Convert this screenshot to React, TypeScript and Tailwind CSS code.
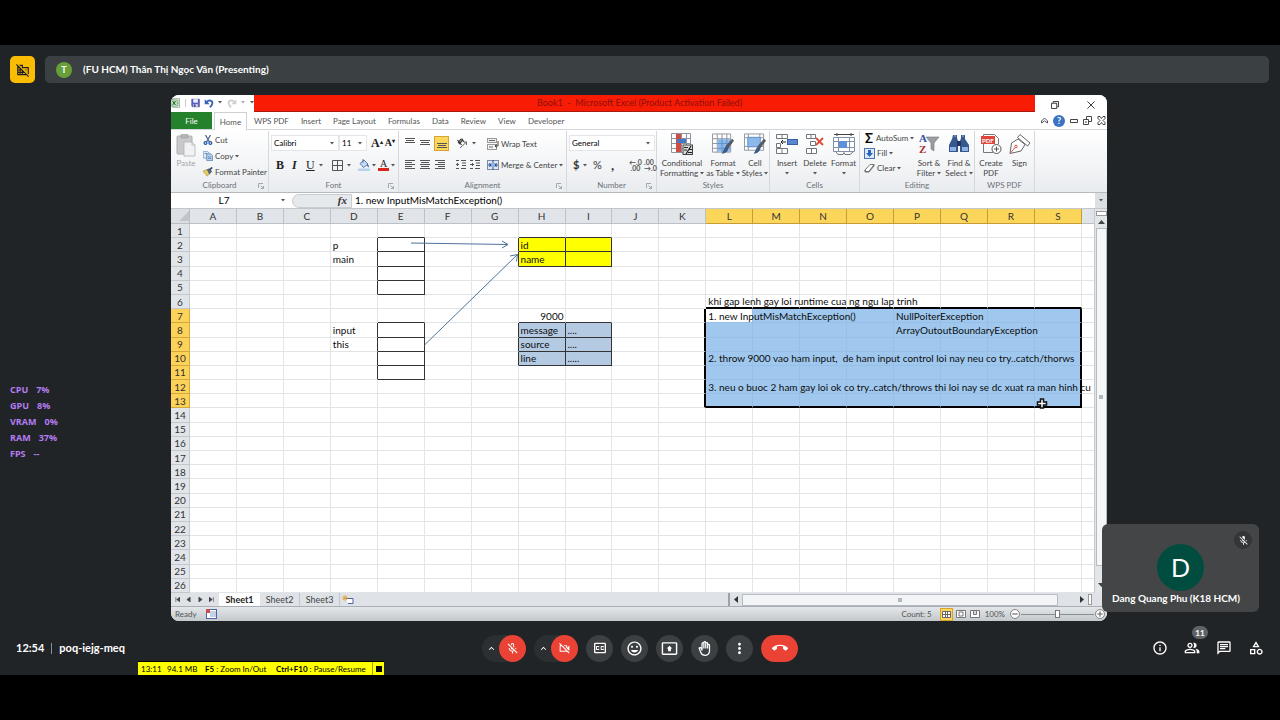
import type { ReactNode } from "react";
import {
  MdCallEnd,
  MdDomainDisabled,
  MdKeyboardArrowUp,
  MdMicOff,
  MdMoreVert,
  MdOutlineBackHand,
  MdOutlineCategory,
  MdOutlineChat,
  MdOutlineClosedCaption,
  MdOutlineInfo,
  MdOutlineMicOff,
  MdOutlineMood,
  MdOutlinePeopleAlt,
  MdOutlinePresentToAll,
  MdOutlineVideocamOff,
} from "react-icons/md";

const columns = "ABCDEFGHIJKLMNOPQRS".split("");
const rows = Array.from({ length: 26 }, (_, i) => i + 1);

const cells: Record<string, string> = {
  D2: "p",
  D3: "main",
  D8: "input",
  D9: "this",
  H2: "id",
  H3: "name",
  H7: "9000",
  H8: "message",
  H9: "source",
  H10: "line",
  I8: "....",
  I9: "....",
  I10: ".....",
  L6: "khi gap lenh gay loi runtime cua ng ngu lap trinh",
  L7: "1. new InputMisMatchException()",
  P7: "NullPoiterException",
  P8: "ArrayOutoutBoundaryException",
  L10: "2. throw 9000 vao ham input,  de ham input control loi nay neu co try..catch/thorws",
  L12: "3. neu o buoc 2 ham gay loi ok co try..catch/throws thi loi nay se dc xuat ra man hinh cu",
};

// [first column, last column, first row, last row]
const boxes = [
  [4, 4, 2, 5],
  [4, 4, 8, 11],
  [7, 8, 2, 3],
  [7, 8, 8, 10],
];

const inBox = (c: number, r: number) =>
  boxes.some(([c1, c2, r1, r2]) => c >= c1 && c <= c2 && r >= r1 && r <= r2);

const isSelected = (c: number, r: number) => c >= 11 && c <= 18 && r >= 7 && r <= 13;

const fillOf = (c: number, r: number) => {
  if (c === 11 && r === 7) return "bg-white";
  if (isSelected(c, r)) return "bg-[#a0c8ee]";
  if ((c === 7 || c === 8) && (r === 2 || r === 3)) return "bg-[#ffff00]";
  if ((c === 7 || c === 8) && r >= 8 && r <= 10) return "bg-[#b4cae3]";
  return "bg-white";
};

const rightLine = (c: number, r: number) => {
  if (isSelected(c, r) !== isSelected(c + 1, r)) return "border-r-2 border-r-black";
  if (inBox(c, r) || inBox(c + 1, r)) return "border-r border-r-[#333333]";
  if (isSelected(c, r)) return "border-r border-r-[#98c0e6]";
  return "border-r border-r-[#e2e5e8]";
};

const bottomLine = (c: number, r: number) => {
  if (isSelected(c, r) !== isSelected(c, r + 1)) return "border-b-2 border-b-black";
  if (inBox(c, r) || inBox(c, r + 1)) return "border-b border-b-[#333333]";
  if (isSelected(c, r)) return "border-b border-b-[#98c0e6]";
  return "border-b border-b-[#e2e5e8]";
};

const Caret = () => (
  <svg viewBox="0 0 4 3" className="w-1 h-[3px] shrink-0" fill="#555">
    <path d="M0 0h4L2 2.6z" />
  </svg>
);

/* ---------- ribbon icons ---------- */

const ExcelIcon = () => (
  <svg viewBox="0 0 12 12" className="w-3 h-3">
    <rect x="2.500" y=".5" width="9" height="11" fill="#fff" stroke="#6f9a6f" />
    <path d="M7 3h4M7 5h4M7 7h4M7 9h4" stroke="#7fae7f" />
    <rect x="0" y="2" width="8" height="8" fill="#e3f1e1" stroke="#3b7d3d" strokeWidth=".7" />
    <path d="M2 3.500l4 5M6 3.500l-4 5" stroke="#26762b" strokeWidth="1.500" />
  </svg>
);

const SaveIcon = () => (
  <svg viewBox="0 0 12 12" className="w-3 h-3">
    <path d="M1 1h10v10H2l-1-1z" fill="#5b62c4" stroke="#3b3f91" strokeWidth=".8" />
    <rect x="3" y="1" width="6" height="4.500" fill="#eef0fb" />
    <rect x="3" y="7.500" width="6" height="3.500" fill="#d3d6ee" />
    <rect x="4" y="8" width="2" height="3" fill="#31357d" />
  </svg>
);

const UndoIcon = ({ color }: { color: string }) => (
  <svg viewBox="0 0 12 12" className="w-[10px] h-[10px]" fill="none" stroke={color} strokeWidth="2.200">
    <path d="M3 5c3-3.500 7.500-2 7 1.500C9.700 9 8.500 10 7 11" />
    <path d="M.8 1.500v6h6z" fill={color} stroke="none" />
  </svg>
);

const PasteIcon = () => (
  <svg viewBox="0 0 20 24" className="w-5 h-6">
    <rect x="1" y="3" width="15" height="18" rx="1" fill="#c9c9cb" stroke="#aeaeb2" />
    <path d="M5 1.500h7V5H5z" fill="#b4b4b8" stroke="#9b9ba0" strokeWidth=".6" />
    <path d="M8 9h8l3 3v11H8z" fill="#f2f2f4" stroke="#b3b3b8" strokeWidth=".8" />
    <path d="M16 9v3h3" fill="none" stroke="#b3b3b8" strokeWidth=".8" />
  </svg>
);

const CutIcon = () => (
  <svg viewBox="0 0 12 12" className="w-[10px] h-[10px]" fill="none">
    <path d="M3 0l4.500 8M9 0L4.500 8" stroke="#5a6f92" strokeWidth="1.600" />
    <circle cx="3" cy="9.500" r="1.700" stroke="#2456a4" strokeWidth="1.500" />
    <circle cx="8.800" cy="9.500" r="1.700" stroke="#2456a4" strokeWidth="1.500" />
  </svg>
);

const CopyIcon = () => (
  <svg viewBox="0 0 12 12" className="w-[10px] h-[10px]" strokeWidth=".8">
    <path d="M.5.5h5l2 2v6h-7z" fill="#dbe8f8" stroke="#6d8fbd" />
    <path d="M4.500 3.500h5l2 2v6h-7z" fill="#bcd4f0" stroke="#3e6cab" />
    <path d="M6 7h4M6 9h4M2 3h3" stroke="#3e6cab" />
  </svg>
);

const PainterIcon = () => (
  <svg viewBox="0 0 12 12" className="w-[10px] h-[10px]">
    <path d="M0 5l5-2L9 7l-4 4z" fill="#e7cf61" stroke="#8d7a28" strokeWidth=".6" />
    <path d="M4.500 3l3-1.500 3.500 4L7.500 9z" fill="#596579" />
    <path d="M8 3.500L11 .5" stroke="#3d4c66" strokeWidth="2" />
  </svg>
);

const BordersIcon = () => (
  <svg viewBox="0 0 11 11" className="w-[11px] h-[11px]" fill="none" stroke="#555">
    <path d="M.5.5h10v10H.5zM5.500.5v10M.5 5.500h10" />
  </svg>
);

const BucketIcon = () => (
  <svg viewBox="0 0 12 12" className="w-3 h-3">
    <path d="M2 4.500L6 1l4 4-4.500 3.500z" fill="#c9dcf3" stroke="#4b6ea3" strokeWidth=".9" />
    <path d="M5 0v4" stroke="#4b6ea3" strokeWidth=".9" />
    <path d="M9 5c2 1 2 2 1.500 3.500C9.500 8 9 7 9 5z" fill="#2f62b5" />
    <rect x="0" y="9.500" width="12" height="2.500" fill="#b8d2ea" />
  </svg>
);

const LinesIcon = ({ d }: { d: string }) => (
  <svg viewBox="0 0 12 12" className="w-3 h-3" stroke="#555">
    <path d={d} />
  </svg>
);

const OrientationIcon = () => (
  <svg viewBox="0 0 12 12" className="w-3 h-3" fill="none" stroke="#333">
    <path d="M2 6l3-4M3 7l4-4.500M1.500 3l4 5M5.500 1.500L8 5" strokeWidth="1.200" />
    <path d="M4 11l6.500-6M10.500 8V5H8" stroke="#666" />
  </svg>
);

const WrapIcon = () => (
  <svg viewBox="0 0 12 12" className="w-3 h-3">
    <rect x=".5" y=".5" width="9" height="4" fill="#eee" stroke="#999" />
    <rect x=".5" y="6.500" width="9" height="5" fill="#f7f7f7" stroke="#999" />
    <path d="M2 2.500h6M2 9h4" stroke="#666" />
    <path d="M11 3v5H8.500M9.500 6.500L8 8l1.500 1.500" fill="none" stroke="#444" />
  </svg>
);

const MergeIcon = () => (
  <svg viewBox="0 0 12 12" className="w-3 h-3">
    <rect x=".5" y="1.500" width="11" height="9" fill="#dfe8f4" stroke="#7d8ca3" />
    <rect x="2" y="4" width="8" height="4" fill="#8fb2e0" />
    <path d="M1 6h3M11 6H8M2.500 4.500L4 6 2.500 7.500M9.500 4.500L8 6l1.500 1.500M6 1v3M6 8v3" fill="none" stroke="#26437a" strokeWidth=".9" />
  </svg>
);

const DecimalIcon = ({ top, bottom }: { top: string; bottom: string }) => (
  <span className="flex flex-col w-3 text-[7px] leading-[6px] font-bold text-[#555]">
    <span>{top}</span>
    <span className="pl-px">{bottom}</span>
  </span>
);

const grid = "M.5.5h19v19H.5zM5.500.5v19M10.500.5v19M15.500.5v19M.5 5.500h19M.5 10.500h19M.5 15.500h19";

const ConditionalIcon = () => (
  <svg viewBox="0 0 22 22" className="w-[22px] h-[22px]">
    <path d={grid} fill="#fff" stroke="#8d949c" />
    <rect x="5" y="1" width="5" height="18" fill="#cf4c45" />
    <rect x="6" y="6" width="9" height="4" fill="#4578c7" />
    <rect x="12" y="12" width="9.500" height="9.500" fill="#ddd" stroke="#444" />
    <path d="M13 14.500h4M13 17h3M17 19.500h4M20 13l-5 8M18 16.500h3" stroke="#222" strokeWidth="1.200" />
  </svg>
);

const brush = "M21 6l1.500 1.500L17 15l-2.500-1.500z";
const bristles = "M14.500 13.500L17 15c0 4-3 6-7 6 2-2 2-5 4.500-7.500z";

const FormatTableIcon = () => (
  <svg viewBox="0 0 23 22" className="w-[22px] h-[22px]">
    <path d={grid} fill="#fff" stroke="#8d949c" />
    <rect x="6" y="6" width="13" height="13" fill="#8db8ea" />
    <path d="M10.500 6v13M15.500 6v13M6 10.500h13M6 15.500h13" stroke="#5f93d0" />
    <path d={brush} fill="#555b66" stroke="#555b66" />
    <path d={bristles} fill="#3d5a85" />
  </svg>
);

const CellStylesIcon = () => (
  <svg viewBox="0 0 23 22" className="w-[22px] h-[22px]">
    <path d="M.5.5h20v17H.5zM4.500.5v17M16.500.5v17M.5 4.500h20M.5 13.500h20" fill="#fff" stroke="#8d949c" />
    <rect x="4" y="4" width="13" height="10" fill="#8db8ea" stroke="#5f93d0" />
    <path d={brush} fill="#555b66" stroke="#555b66" />
    <path d={bristles} fill="#3d5a85" />
  </svg>
);

const InsertIcon = () => (
  <svg viewBox="0 0 22 22" className="w-[22px] h-[22px]">
    <path d="M.5 1.500h11v4H.5zM6 1.500v4M.5 10.500h4v4h-4zM.5 15.500h11v5H.5zM6 15.500v5" fill="#fff" stroke="#70767e" />
    <rect x="11.500" y="6.500" width="10" height="5" fill="#5b87d2" stroke="#3a5fa3" />
    <path d="M10 9H5M7 7L5 9l2 2" fill="none" stroke="#222" />
  </svg>
);

const DeleteIcon = () => (
  <svg viewBox="0 0 22 22" className="w-[22px] h-[22px]">
    <path d="M2.500 1.500h9v4h-9zM7 1.500v4M2.500 15.500h10v5h-10zM7.500 15.500v5M6.500 8.500h5v4h-5z" fill="#fff" stroke="#70767e" />
    <path d="M12 5l7 7M19 5l-7 7" stroke="#dd4b35" strokeWidth="1.800" />
  </svg>
);

const FormatIcon = () => (
  <svg viewBox="0 0 24 22" className="w-6 h-[22px]">
    <path d="M2 1.500h20M5 0v3M19 0v3" stroke="#444" />
    <path d="M1.500 4.500h21v14h-21zM6.500 4.500v14M17.500 4.500v14M1.500 8.500h21M1.500 14.500h21" fill="#fff" stroke="#8390a3" />
    <rect x="7" y="8" width="8" height="7" fill="#5d91da" />
    <path d="M4 19l2 2.500h5l1-2 1 2h5l3-2.500" fill="none" stroke="#777" />
  </svg>
);

const FillIcon = () => (
  <svg viewBox="0 0 11 11" className="w-[11px] h-[11px]">
    <rect x=".5" y=".5" width="10" height="10" fill="#dce9f8" stroke="#4a73b1" />
    <path d="M4 2h3v3h2L5.500 9 2 5h2z" fill="#2b63bd" />
  </svg>
);

const EraserIcon = () => (
  <svg viewBox="0 0 11 11" className="w-[11px] h-[11px]" fill="#fff" stroke="#666" strokeWidth=".9">
    <path d="M1 7l5-5.500h4L5 8.500H1.500z" />
    <path d="M1 7v2h4l5-6V1.500" fill="none" />
  </svg>
);

const SortIcon = () => (
  <svg viewBox="0 0 22 22" className="w-[22px] h-[22px]">
    <path d="M8 4h13l-5 6v8l-3-2v-6z" fill="#9a9ea3" stroke="#777" strokeWidth=".6" />
    <text x="1" y="9" fontSize="11" fontWeight="bold" fontFamily="Liberation Serif, serif" fill="#2f4f9e">A</text>
    <text x="1" y="20" fontSize="11" fontWeight="bold" fontFamily="Liberation Serif, serif" fill="#a83232">Z</text>
  </svg>
);

const FindIcon = () => (
  <svg viewBox="0 0 22 22" className="w-[22px] h-[22px]" fill="#37588f">
    <path d="M5 2h4v3l1 3v11H1v-7L4 6z" />
    <path d="M13 2h4v4l4 6v7h-9V8l1-3z" />
    <rect x="9" y="8" width="4" height="5" fill="#22375f" />
    <path d="M2 14h6v4H2zM14 14h6v4h-6z" fill="#8fb2e4" />
    <path d="M6 3h2M14 3h2" stroke="#a5c0e8" />
  </svg>
);

const PdfIcon = () => (
  <svg viewBox="0 0 22 22" className="w-[22px] h-[22px]">
    <path d="M3.500 11v8.500H13M3.500 3V1.500h11l4 4V11" fill="none" stroke="#777" />
    <rect x="1" y="3" width="14" height="8" fill="#e2453b" />
    <text x="2" y="9.500" fontSize="6" fontWeight="bold" fontFamily="Lato, sans-serif" fill="#fff">PDF</text>
    <circle cx="16.500" cy="16" r="4.500" fill="#fff" stroke="#555" />
    <path d="M14 16h5M16.500 13.500v5" stroke="#555" />
  </svg>
);

const SignIcon = () => (
  <svg viewBox="0 0 22 22" className="w-[22px] h-[22px]" fill="#fff" stroke="#666">
    <path d="M11 1.500L21 10l-2.500 3-10-8.500z" />
    <path d="M9 6L2.500 10 1 20.500 12 18l4-6.500z" />
    <path d="M1.500 20L6 14.500" stroke="#d2554b" />
    <circle cx="7" cy="13.500" r="1.300" stroke="#d2554b" />
  </svg>
);

/* ---------- ribbon ---------- */

const Group = ({ label, width, launcher, children }: { label: string; width: string; launcher?: boolean; children: ReactNode }) => (
  <div className={`${width} shrink-0 flex flex-col border-r border-[#d5d8dc]`}>
    <div className="flex-1 min-h-0">{children}</div>
    <div className="relative h-[13px] text-center leading-3 text-[#6d7278]">
      {label}
      {launcher && (
        <svg viewBox="0 0 6 6" className="absolute right-1 top-1 w-[6px] h-[6px]" fill="none" stroke="#a4a8ae">
          <path d="M.5 5V.5H5M2.500 2.500l3 3M5.500 3v2.500H3" />
        </svg>
      )}
    </div>
  </div>
);

const BigButton = ({ icon, lines, width, caret }: { icon: ReactNode; lines: string[]; width: string; caret?: boolean }) => (
  <button className={`${width} flex flex-col items-center shrink-0 pt-[2px]`}>
    <span className="h-[25px]">{icon}</span>
    <span className="leading-[10px] whitespace-nowrap">{lines[0]}</span>
    <span className="flex items-center gap-[2px] h-[10px] leading-[10px] whitespace-nowrap">
      {lines[1]}
      {caret && <Caret />}
    </span>
  </button>
);

const SmallButton = ({ icon, text, caret }: { icon: ReactNode; text: string; caret?: boolean }) => (
  <button className="flex items-center gap-[2px] whitespace-nowrap leading-3">
    {icon}
    {text}
    {caret && <Caret />}
  </button>
);

const Drop = ({ label, value, width }: { label: string; value: string; width: string }) => (
  <span className={`${width} flex items-center pr-1 border border-[#e3e5e8] bg-white`}>
    <select aria-label={label} className="appearance-none flex-1 min-w-0 pl-[2px] h-[14px] bg-transparent text-black outline-none">
      <option>{value}</option>
    </select>
    <Caret />
  </span>
);

const Ribbon = () => (
  <div className="flex h-[63px] pt-px overflow-hidden bg-linear-to-b from-white to-[#e9ecef] border-b border-[#b6babf] text-[#444]">
    <Group label="Clipboard" width="w-[98px]" launcher>
      <div className="flex">
        <button className="w-[30px] flex flex-col items-center pt-[2px] gap-[1px] text-[#a5a5a8]">
          <PasteIcon />
          <span className="leading-[10px]">Paste</span>
        </button>
        <div className="flex flex-col gap-1 pt-[3px] pl-[2px]">
          <SmallButton icon={<CutIcon />} text="Cut" />
          <SmallButton icon={<CopyIcon />} text="Copy" caret />
          <SmallButton icon={<PainterIcon />} text="Format Painter" />
        </div>
      </div>
    </Group>
    <Group label="Font" width="w-[130px]" launcher>
      <div className="flex items-center pt-1 pl-[2px]">
        <Drop label="Font" value="Calibri" width="w-[68px]" />
        <Drop label="Font size" value="11" width="w-[28px]" />
        <button className="pl-1 font-bold text-[12px] leading-4 font-['Liberation_Serif',serif] text-[#222]">
          A<sup className="text-[6px]">▴</sup>
        </button>
        <button className="pl-[2px] font-bold text-[10px] leading-4 font-['Liberation_Serif',serif] text-[#222]">
          A<sup className="text-[6px]">▾</sup>
        </button>
      </div>
      <div className="flex items-center pt-[6px] pl-[7px] text-[#222]">
        <button className="w-[16px] text-left font-bold text-[12px] leading-4 font-['Liberation_Serif',serif]">B</button>
        <button className="w-[14px] text-left italic font-bold text-[12px] leading-4 font-['Liberation_Serif',serif]">I</button>
        <button className="w-[26px] flex items-center gap-1 underline text-[12px] leading-4 font-['Liberation_Serif',serif]">
          U
          <Caret />
        </button>
        <button className="w-[26px] flex items-center gap-1">
          <BordersIcon />
          <Caret />
        </button>
        <button className="w-[20px] flex items-center gap-[2px]">
          <BucketIcon />
          <Caret />
        </button>
        <button className="flex items-center gap-[2px]">
          <span className="w-[11px] h-3 border-b-[3px] border-[#d9251c] text-[10px] leading-[9px] font-['Liberation_Serif',serif]">A</span>
          <Caret />
        </button>
      </div>
    </Group>
    <Group label="Alignment" width="w-[168px]" launcher>
      <div className="flex">
        <div className="w-[85px] pl-[5px]">
          <div className="flex items-center gap-[3px] pt-[3px] h-[21px]">
            <LinesIcon d="M1 1.500h10M2 3.500h8M1 5.500h10" />
            <LinesIcon d="M1 3.500h10M2 5.500h8M1 7.500h10" />
            <span className="flex items-center justify-center w-[15px] h-[15px] border border-[#d6a531] bg-[#fdd65c]">
              <LinesIcon d="M1 6.500h10M2 8.500h8M1 10.500h10" />
            </span>
            <span className="flex items-center gap-1 pl-1">
              <OrientationIcon />
              <Caret />
            </span>
          </div>
          <div className="flex items-center gap-[3px] pt-[7px]">
            <LinesIcon d="M1 1.500h10M1 3.500h7M1 5.500h10M1 7.500h7M1 9.500h10" />
            <LinesIcon d="M1 1.500h10M2 3.500h8M1 5.500h10M2 7.500h8M1 9.500h10" />
            <LinesIcon d="M1 1.500h10M4 3.500h7M1 5.500h10M4 7.500h7M1 9.500h10" />
            <span className="flex gap-[2px] pl-[6px]">
              <LinesIcon d="M1 1.500h3M6 1.500h5M7 4h4M1 5.500h3M2.500 4v3M7 6.500h4M1 9.500h3M6 9.500h5" />
              <LinesIcon d="M1 1.500h3M6 1.500h5M7 4h4M1 5.500h4M3.500 4v3M7 6.500h4M1 9.500h3M6 9.500h5" />
            </span>
          </div>
        </div>
        <div className="flex flex-col items-start gap-[9px] pt-[7px] pl-[3px]">
          <SmallButton icon={<WrapIcon />} text="Wrap Text" />
          <SmallButton icon={<MergeIcon />} text="Merge & Center" caret />
        </div>
      </div>
    </Group>
    <Group label="Number" width="w-[90px]" launcher>
      <div className="pt-1 pl-[2px]">
        <Drop label="Number format" value="General" width="w-[86px]" />
      </div>
      <div className="flex items-center pt-[6px] pl-[6px] text-[11px] leading-4 text-[#333]">
        <button className="w-[20px] flex items-center gap-1 font-bold">
          $<Caret />
        </button>
        <button className="w-[18px] text-left">%</button>
        <button className="w-[18px] text-left text-[14px] font-bold">,</button>
        <button className="w-[14px]">
          <DecimalIcon top="←.0" bottom=".00" />
        </button>
        <button className="w-3">
          <DecimalIcon top=".00" bottom="→.0" />
        </button>
      </div>
    </Group>
    <Group label="Styles" width="w-[113px]">
      <div className="flex pl-[2px]">
        <BigButton icon={<ConditionalIcon />} lines={["Conditional", "Formatting"]} width="w-[46px]" caret />
        <BigButton icon={<FormatTableIcon />} lines={["Format", "as Table"]} width="w-[36px]" caret />
        <BigButton icon={<CellStylesIcon />} lines={["Cell", "Styles"]} width="w-[28px]" caret />
      </div>
    </Group>
    <Group label="Cells" width="w-[90px]">
      <div className="flex pl-[3px]">
        <BigButton icon={<InsertIcon />} lines={["Insert", ""]} width="w-[28px]" caret />
        <BigButton icon={<DeleteIcon />} lines={["Delete", ""]} width="w-[28px]" caret />
        <BigButton icon={<FormatIcon />} lines={["Format", ""]} width="w-[29px]" caret />
      </div>
    </Group>
    <Group label="Editing" width="w-[115px]">
      <div className="flex">
        <div className="flex flex-col items-start w-[53px] gap-[3px] pt-[1px] pl-1">
          <SmallButton icon={<span className="w-[10px] text-[13px] leading-3 font-bold text-black">Σ</span>} text="AutoSum" caret />
          <SmallButton icon={<FillIcon />} text="Fill" caret />
          <SmallButton icon={<EraserIcon />} text="Clear" caret />
        </div>
        <BigButton icon={<SortIcon />} lines={["Sort &", "Filter"]} width="w-[32px]" caret />
        <BigButton icon={<FindIcon />} lines={["Find &", "Select"]} width="w-[28px]" caret />
      </div>
    </Group>
    <Group label="WPS PDF" width="w-[60px]">
      <div className="flex pl-px">
        <BigButton icon={<PdfIcon />} lines={["Create", "PDF"]} width="w-[30px]" />
        <BigButton icon={<SignIcon />} lines={["Sign", ""]} width="w-[27px]" />
      </div>
    </Group>
  </div>
);

const TitleBar = () => (
  <div className="flex h-[17px] bg-white">
    <div className="flex items-center gap-[5px] w-[83px] pb-[2px]">
      <ExcelIcon />
      <span className="w-px h-2 bg-[#c5c8cc]"></span>
      <SaveIcon />
      <span className="flex items-center gap-1 -ml-px">
        <UndoIcon color="#3c62b4" />
        <Caret />
      </span>
      <span className="flex items-center gap-1 opacity-50">
        <span className="-scale-x-100">
          <UndoIcon color="#9aa0a8" />
        </span>
        <Caret />
      </span>
      <Caret />
    </div>
    <div className="flex-1 pr-[10px] bg-[#f91c05] border-b border-[#a61a10] text-center text-[9px] leading-4 text-[#8d0f08]">
      Book1 &nbsp;-&nbsp; Microsoft Excel (Product Activation Failed)
    </div>
    <div className="flex items-center justify-between w-[72px] pt-[2px] pl-4 pr-3">
      <button aria-label="Restore">
        <svg viewBox="0 0 9 9" className="w-2 h-2" fill="none" stroke="#222">
          <path d="M.5 2.500h6v6h-6zM2.500 2V.5h6v6H7" />
        </svg>
      </button>
      <button aria-label="Close">
        <svg viewBox="0 0 9 9" className="w-2 h-2" fill="none" stroke="#222">
          <path d="M.5.5l8 8M8.500.5l-8 8" />
        </svg>
      </button>
    </div>
  </div>
);

const tabs = ["WPS PDF", "Insert", "Page Layout", "Formulas", "Data", "Review", "View", "Developer"];

const RibbonTabs = () => (
  <div className="flex h-[18px] bg-white border-b border-[#d3d6da] text-[#555]">
    <button className="w-[41px] mr-[2px] bg-[#24812c] text-white">File</button>
    <button className="w-[33px] mr-px -mb-px border border-b-0 border-[#cdd1d5] bg-white">Home</button>
    {tabs.map((tab) => (
      <button key={tab} className="px-[6px] whitespace-nowrap">
        {tab}
      </button>
    ))}
    <div className="flex items-center gap-[5px] ml-auto pr-px">
      <svg viewBox="0 0 7 7" className="w-[7px] h-[7px]" fill="none" stroke="#555">
        <path d="M.5 4l3-3 3 3v2l-3-2-3 2z" />
      </svg>
      <span className="flex items-center justify-center w-3 h-3 rounded-full bg-[#3b72c4] text-white font-bold text-[9px]">?</span>
      <svg viewBox="0 0 8 4" className="w-2 h-1" fill="none" stroke="#444">
        <path d="M.5.5h7v3h-7z" />
      </svg>
      <svg viewBox="0 0 9 9" className="w-[9px] h-[9px]" fill="none" stroke="#444">
        <path d="M.5 3.500h5v5h-5zM3.500 3V.5h5v5H6M2 6h2" />
      </svg>
      <svg viewBox="0 0 9 9" className="w-[9px] h-[9px]" fill="none" stroke="#444">
        <path d="M1 .5h2l1.500 2 1.500-2h2v2l-2 2 2 2v2H6l-1.500-2-1.500 2H1v-2l2-2-2-2z" />
      </svg>
    </div>
  </div>
);

const FormulaBar = () => (
  <div className="flex items-center h-4 bg-white border-b border-[#c3c7cb]">
    <input aria-label="Name box" defaultValue="L7" className="w-[106px] h-[15px] text-center text-[10px] text-black outline-none" />
    <span className="w-[15px] pl-1">
      <Caret />
    </span>
    <span className="flex items-center justify-end w-[60px] h-[14px] pr-1 rounded-l-full border border-[#c9cdd1] bg-[#e6e9ec] text-[11px] italic font-bold font-['Liberation_Serif',serif] text-[#333]">
      fx
    </span>
    <input
      aria-label="Formula"
      defaultValue="1. new InputMisMatchException()"
      className="flex-1 h-[15px] pl-[3px] text-[10px] text-black outline-none"
    />
    <button aria-label="Expand" className="flex items-center justify-center w-3 h-[15px] bg-[#dde0e3]">
      <Caret />
    </button>
  </div>
);

/* ---------- sheet ---------- */

const Sheet = () => (
  <div className="flex">
    <div className="relative flex-1 min-w-0 overflow-hidden">
      <table className="w-full h-[384px] table-fixed border-separate border-spacing-0 text-[10px] leading-3 text-[#0d0d0d]">
        <colgroup>
          <col className="w-[19px]" />
          {columns.map((name) => (
            <col key={name} />
          ))}
          <col className="w-3" />
        </colgroup>
        <thead>
          <tr>
            <th className="h-[15px] p-0 bg-[#dce0e4] border-r border-b border-[#b9bec4]">
              <svg viewBox="0 0 10 10" className="w-[10px] h-[10px] ml-auto" fill="#bfc5cb">
                <path d="M10 0v10H0z" />
              </svg>
            </th>
            {columns.map((name, c) => (
              <th
                key={name}
                className={`p-0 font-normal text-[#333] border-r border-b ${
                  c >= 11 ? "bg-[#fbd65b] border-[#c79b35]" : "bg-[#e1e5e9] border-[#bcc1c7]"
                }`}
              >
                {name}
              </th>
            ))}
            <th className="p-0 bg-[#e1e5e9] border-b border-[#bcc1c7]"></th>
          </tr>
        </thead>
        <tbody>
          {rows.map((r) => (
            <tr key={r}>
              <th
                className={`h-[14px] p-0 font-normal text-[#333] border-r border-b ${
                  r >= 7 && r <= 13 ? "bg-[#fdd258] border-[#d3a83d]" : "bg-[#e1e5e9] border-[#c3c8cd]"
                }`}
              >
                {r}
              </th>
              {columns.map((name, c) => (
                <td
                  key={name}
                  className={`h-[14px] py-0 pl-[2px] pr-px whitespace-pre ${r === 7 && c === 7 ? "text-right" : ""} ${fillOf(c, r)} ${rightLine(c, r)} ${bottomLine(c, r)}`}
                >
                  {cells[name + r]}
                </td>
              ))}
              <td className="p-0 bg-white border-b border-[#e2e5e8]"></td>
            </tr>
          ))}
        </tbody>
      </table>
      {/* connectors and mouse pointer drawn over the cells */}
      <svg viewBox="0 0 923 384" preserveAspectRatio="none" className="absolute inset-0 w-full h-full pointer-events-none" fill="none" stroke="#4d7399">
        <path d="M240 34L337 35.500M331 32l6 3.500-6 3.500" />
        <path d="M253.500 136L346.500 45.500M339 47l7.500-1.500-1 7" />
        <path d="M869.500 190h3v3h3v3h-3v3h-3v-3h-3v-3h3z" fill="#fff" stroke="#111" strokeWidth="1.500" />
      </svg>
    </div>
    <div className="flex flex-col items-center w-[13px] py-[2px] bg-[#e3e6e9] border-l border-[#c6cacf]">
      <span className="w-[11px] h-[5px] border border-[#999] bg-white"></span>
      <svg viewBox="0 0 7 4" className="w-[7px] h-1 my-1" fill="#444">
        <path d="M3.500 0L7 4H0z" />
      </svg>
      <span className="flex items-center justify-center flex-1 w-[11px] border border-[#b7bcc2] bg-[#f4f6f8]">
        <span className="w-1 h-1 bg-[#b2b7bd]"></span>
      </span>
      <svg viewBox="0 0 7 4" className="w-[7px] h-1 mt-[17px] mb-1" fill="#444">
        <path d="M0 0h7L3.500 4z" />
      </svg>
    </div>
  </div>
);

const SheetTabs = () => (
  <div className="flex items-center h-[14px] bg-[#dfe3e7] border-b border-[#a9aeb4] text-[9px] text-[#444]">
    <div className="flex items-center justify-between w-[48px] pl-1 pr-[5px]">
      {["M1 0v6M6 0L2 3l4 3z", "M5 0L1 3l4 3z", "M1 0l4 3-4 3z", "M0 0l4 3-4 3zM5.500 0v6"].map((d) => (
        <svg key={d} viewBox="0 0 6 6" className="w-[5px] h-[5px]" fill="#444" stroke="#444" strokeWidth=".7">
          <path d={d} />
        </svg>
      ))}
    </div>
    <button className="w-[41px] h-[13px] font-bold bg-white text-[#222]">Sheet1</button>
    <button className="w-[40px] border-r border-[#bfc4c9]">Sheet2</button>
    <button className="w-[40px] border-r border-[#bfc4c9]">Sheet3</button>
    <svg viewBox="0 0 12 10" className="w-3 h-[10px] ml-[2px]">
      <path d="M4 3.500h7v5H6" fill="#fff" stroke="#4a62a8" />
      <path d="M3 0v6M0 3h6M1 1l4 4M5 1L1 5" stroke="#e0a63a" />
    </svg>
    <div className="flex items-center ml-auto w-[379px] h-[13px] gap-1 border-l-2 border-[#9da2a8] pl-1">
      <svg viewBox="0 0 4 7" className="w-1 h-[7px]" fill="#333">
        <path d="M4 0v7L0 3.500z" />
      </svg>
      <span className="flex items-center justify-center flex-1 h-3 border border-[#b7bcc2] bg-[#f2f4f6]">
        <span className="w-1 h-1 bg-[#b2b7bd]"></span>
      </span>
      <svg viewBox="0 0 4 7" className="w-1 h-[7px] ml-[18px]" fill="#333">
        <path d="M0 0v7l4-3.500z" />
      </svg>
      <span className="w-1 h-[11px] mr-[15px] border border-[#999] bg-white"></span>
    </div>
  </div>
);

const ZoomMark = ({ d }: { d: string }) => (
  <svg viewBox="0 0 9 9" className="w-[10px] h-[10px] shrink-0" fill="#fff" stroke="#666">
    <circle cx="4.500" cy="4.500" r="4" strokeWidth=".7" />
    <path d={d} />
  </svg>
);

const StatusBar = () => (
  <div className="flex items-center h-[14px] pl-1 pr-[2px] bg-linear-to-b from-[#e4e7e9] to-[#c2c8cb] text-[#555]">
    <span className="w-[31px]">Ready</span>
    <svg viewBox="0 0 11 10" className="w-[11px] h-[10px]">
      <rect x=".5" y=".5" width="10" height="9" fill="#fff" stroke="#4c66a5" />
      <path d="M1 3h9M4 5h6M4 7h6" stroke="#8ba2cf" />
      <rect x="0" y="0" width="4" height="4" fill="#c95050" />
    </svg>
    <span className="ml-auto pr-2">Count: 5</span>
    <span className="flex items-center justify-center w-[13px] h-[13px] border border-[#d6a531] bg-[#fdd65c]">
      <svg viewBox="0 0 9 7" className="w-[9px] h-[7px]" fill="#fff" stroke="#666">
        <path d="M.5.5h8v6h-8zM3.500.5v6M5.500.5v6M.5 3.500h8" />
      </svg>
    </span>
    <svg viewBox="0 0 10 8" className="w-[10px] h-2 ml-[3px]" fill="#fff" stroke="#777">
      <path d="M.5.5h9v7h-9zM3 2h4v4H3z" />
    </svg>
    <svg viewBox="0 0 10 8" className="w-[10px] h-2 ml-1" fill="#fff" stroke="#777">
      <path d="M.5.5h9v7h-9zM3.500.5v4h3v-4" />
    </svg>
    <label htmlFor="zoom" className="px-[5px]">100%</label>
    <ZoomMark d="M2 4.500h5" />
    <input
      id="zoom"
      type="range"
      defaultValue="50"
      className="w-[73px] h-px mx-px appearance-none bg-[#8a8f94] [&::-webkit-slider-thumb]:appearance-none [&::-webkit-slider-thumb]:w-[5px] [&::-webkit-slider-thumb]:h-2 [&::-webkit-slider-thumb]:bg-white [&::-webkit-slider-thumb]:border [&::-webkit-slider-thumb]:border-[#777]"
    />
    <ZoomMark d="M2 4.500h5M4.500 2v5" />
  </div>
);

const ExcelWindow = () => (
  <section className="flex-1 min-w-0 rounded-lg overflow-hidden bg-white font-[Lato,sans-serif] text-[8px]">
    <TitleBar />
    <RibbonTabs />
    <Ribbon />
    <FormulaBar />
    <Sheet />
    <SheetTabs />
    <StatusBar />
  </section>
);

/* ---------- call ---------- */

const stats = [
  ["CPU", "7%"],
  ["GPU", "8%"],
  ["VRAM", "0%"],
  ["RAM", "37%"],
  ["FPS", "--"],
];

const RoundButton = ({ label, children }: { label: string; children: ReactNode }) => (
  <button aria-label={label} className="flex items-center justify-center w-[27px] h-[27px] rounded-full bg-[#3c4043]">
    {children}
  </button>
);

const DeviceButton = ({ label, children }: { label: string; children: ReactNode }) => (
  <div className="flex items-center justify-between w-[44px] rounded-full bg-[#2b2f32]">
    <button aria-label={`${label} options`} className="pl-1">
      <MdKeyboardArrowUp size={11} />
    </button>
    <button aria-label={label} className="flex items-center justify-center w-[27px] h-[27px] rounded-full bg-[#ea4335]">
      {children}
    </button>
  </div>
);

const CallBar = () => (
  <footer className="grid grid-cols-[1fr_auto_1fr] items-center h-[54px] px-4">
    <div className="flex items-center text-[11px] font-bold">
      <span>12:54</span>
      <span className="w-px h-[11px] mx-[7px] bg-[#8b8f92]"></span>
      <span>poq-iejg-meq</span>
    </div>
    <div className="flex items-center gap-2">
      <DeviceButton label="Microphone">
        <MdOutlineMicOff size={13} />
      </DeviceButton>
      <DeviceButton label="Camera">
        <MdOutlineVideocamOff size={13} />
      </DeviceButton>
      <RoundButton label="Captions">
        <MdOutlineClosedCaption size={16} />
      </RoundButton>
      <RoundButton label="Reactions">
        <MdOutlineMood size={17} />
      </RoundButton>
      <RoundButton label="Present">
        <MdOutlinePresentToAll size={17} />
      </RoundButton>
      <RoundButton label="Raise hand">
        <MdOutlineBackHand size={15} />
      </RoundButton>
      <RoundButton label="More">
        <MdMoreVert size={17} />
      </RoundButton>
      <button aria-label="Leave call" className="flex items-center justify-center w-[37px] h-[27px] rounded-full bg-[#ea4335]">
        <MdCallEnd size={16} />
      </button>
    </div>
    <div className="flex items-center justify-end gap-4">
      <button aria-label="Details">
        <MdOutlineInfo size={16} />
      </button>
      <button aria-label="People" className="relative">
        <MdOutlinePeopleAlt size={16} />
        <span className="absolute -top-[14px] left-2 flex items-center justify-center w-4 h-[13px] rounded-full bg-[#5f6368] text-[8px] font-bold">
          11
        </span>
      </button>
      <button aria-label="Chat">
        <MdOutlineChat size={16} />
      </button>
      <button aria-label="Activities">
        <MdOutlineCategory size={16} />
      </button>
    </div>
  </footer>
);

const App = () => {
  return (
    <div className="min-h-screen py-[45px] bg-black">
      <main className="relative pt-[11px] bg-[#202426] font-[Lato,sans-serif] text-white">
        <header className="flex gap-[10px] pl-[10px] pr-[11px]">
          <button aria-label="Company info" className="flex items-center justify-center w-[25px] h-[27px] rounded-[5px] bg-[#fbbc04] text-[#202124]">
            <MdDomainDisabled size={14} />
          </button>
          <div className="flex items-center flex-1 h-[27px] pl-[11px] gap-[11px] rounded-[5px] bg-[#3b4042] text-[10px] font-bold">
            <span className="flex items-center justify-center w-4 h-4 rounded-full bg-[#689f38] text-[9px]">T</span>
            (FU HCM) Thân Thị Ngọc Vân (Presenting)
          </div>
        </header>
        <div className="flex pt-3 pr-[173px]">
          <aside className="w-[171px] shrink-0 flex flex-col justify-end pl-[10px] pb-[159px] font-['Open_Sans',sans-serif] text-[9px] leading-4 font-bold text-[#b57cf2]">
            {stats.map(([name, value]) => (
              <div key={name} className="flex gap-2">
                <span>{name}</span>
                <span>{value}</span>
              </div>
            ))}
          </aside>
          <ExcelWindow />
        </div>
        <CallBar />

        <div className="absolute right-[21px] bottom-[63px] flex flex-col items-center w-[157px] h-[88px] pt-5 rounded-md bg-[#434546]">
          <span className="absolute top-[7px] right-[7px] flex items-center justify-center w-[18px] h-[18px] rounded-full bg-[#333536]">
            <MdMicOff size={11} />
          </span>
          <span className="flex items-center justify-center w-[47px] h-[47px] rounded-full bg-[#004d40] text-[25px]">D</span>
          <span className="w-full pl-[10px] leading-[14px] text-[10px] font-bold whitespace-nowrap">Dang Quang Phu (K18 HCM)</span>
        </div>

        <div className="absolute left-[138px] bottom-0 flex items-center h-[14px] pl-[3px] border-t border-black bg-[#ffff00] text-[8px] text-black whitespace-nowrap">
          <span className="w-[26px]">13:11</span>
          <span className="w-[38px]">94.1 MB</span>
          <span className="w-[71px]">
            <b>F5</b> : Zoom In/Out
          </span>
          <span className="w-[96px]">
            <b>Ctrl+F10</b> : Pause/Resume
          </span>
          <span className="flex items-center justify-center w-3 h-full border-l border-[#a0a000]">
            <span className="w-[6px] h-[6px] bg-black"></span>
          </span>
        </div>
      </main>
    </div>
  );
};

export default App;
